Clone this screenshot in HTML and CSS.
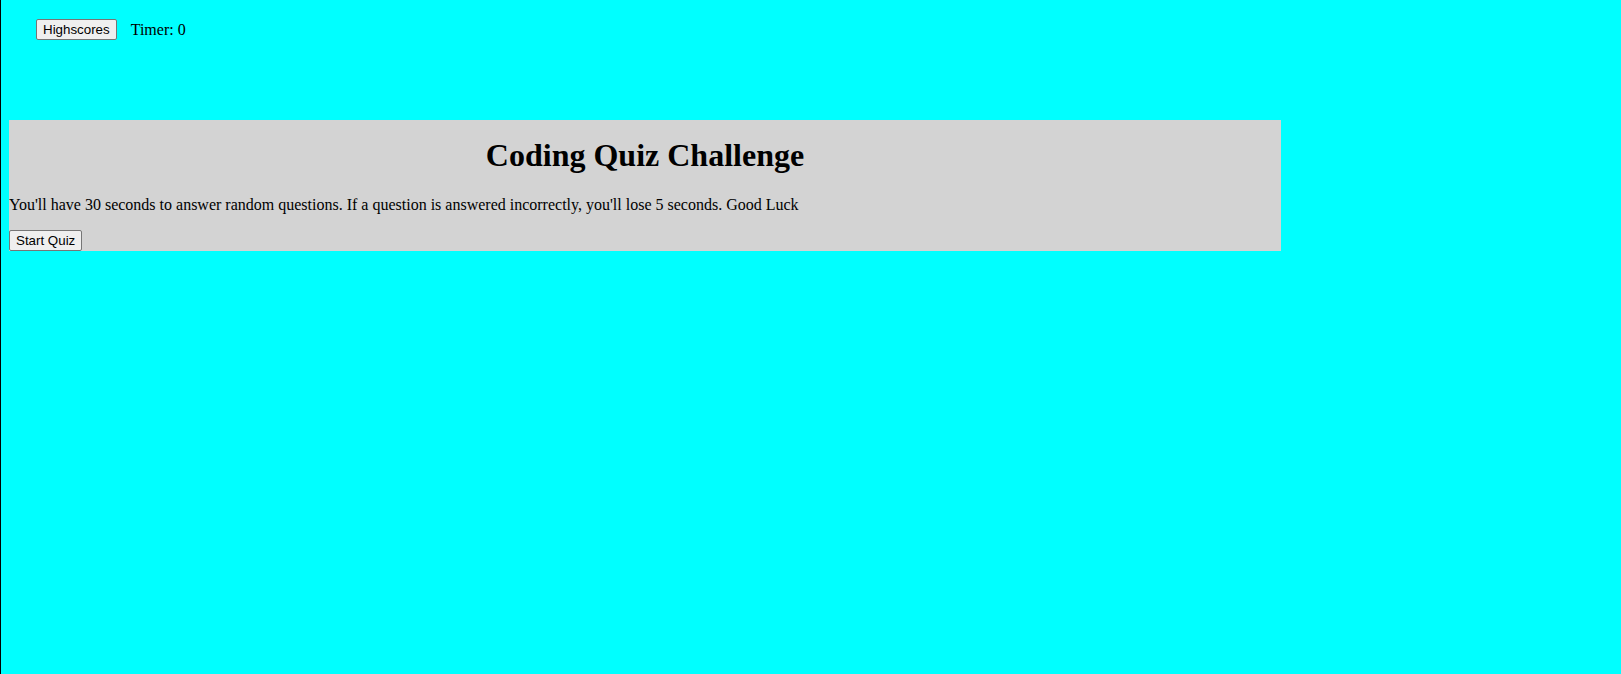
FILE: index.html
```html
<!DOCTYPE html>
<html lang="en">
<head>
<meta charset="utf-8">
<title>Coding Quiz Challenge</title>
<link rel="stylesheet" href="styles.css">
</head>
<body>
<header class="topbar">
  <button class="btn" type="button">Highscores</button>
  <span class="timer">Timer: 0</span>
</header>
<section class="quiz">
  <h1 class="quiz-title">Coding Quiz Challenge</h1>
  <p class="quiz-text">You'll have 30 seconds to answer random questions. If a question is answered incorrectly, you'll lose 5 seconds. Good Luck</p>
  <button class="btn btn-start" type="button">Start Quiz</button>
</section>
</body>
</html>
```
FILE: styles.css
```css
html {
  min-height: 100vh;
  box-sizing: border-box;
  border-left: 1px solid #000;
  background: #00ffff;
}

body {
  margin: 8px;
  font-family: "Liberation Serif", "Times New Roman", serif;
  font-size: 16px;
  color: #000;
}

.topbar {
  display: flex;
  align-items: center;
  gap: 14px;
  height: 21px;
  padding: 11px 0 0 27px;
}

.btn {
  font-family: "Liberation Sans", Arial, sans-serif;
  font-size: 13.333px;
  color: #000;
  background: #efefef;
  border: 1px solid #767676;
  border-radius: 2px;
  padding: 1px 6px;
  height: 21px;
  line-height: normal;
  box-sizing: border-box;
}

.timer {
  font-size: 16px;
}

.quiz {
  display: flow-root;
  width: 1272px;
  margin-top: 80px;
  background: #d3d3d3;
}

.quiz-title {
  margin: 17px 0 22px;
  font-size: 32px;
  font-weight: bold;
  text-align: center;
}

.quiz-text {
  margin: 16px 0;
}

.btn-start {
  display: block;
}
```
